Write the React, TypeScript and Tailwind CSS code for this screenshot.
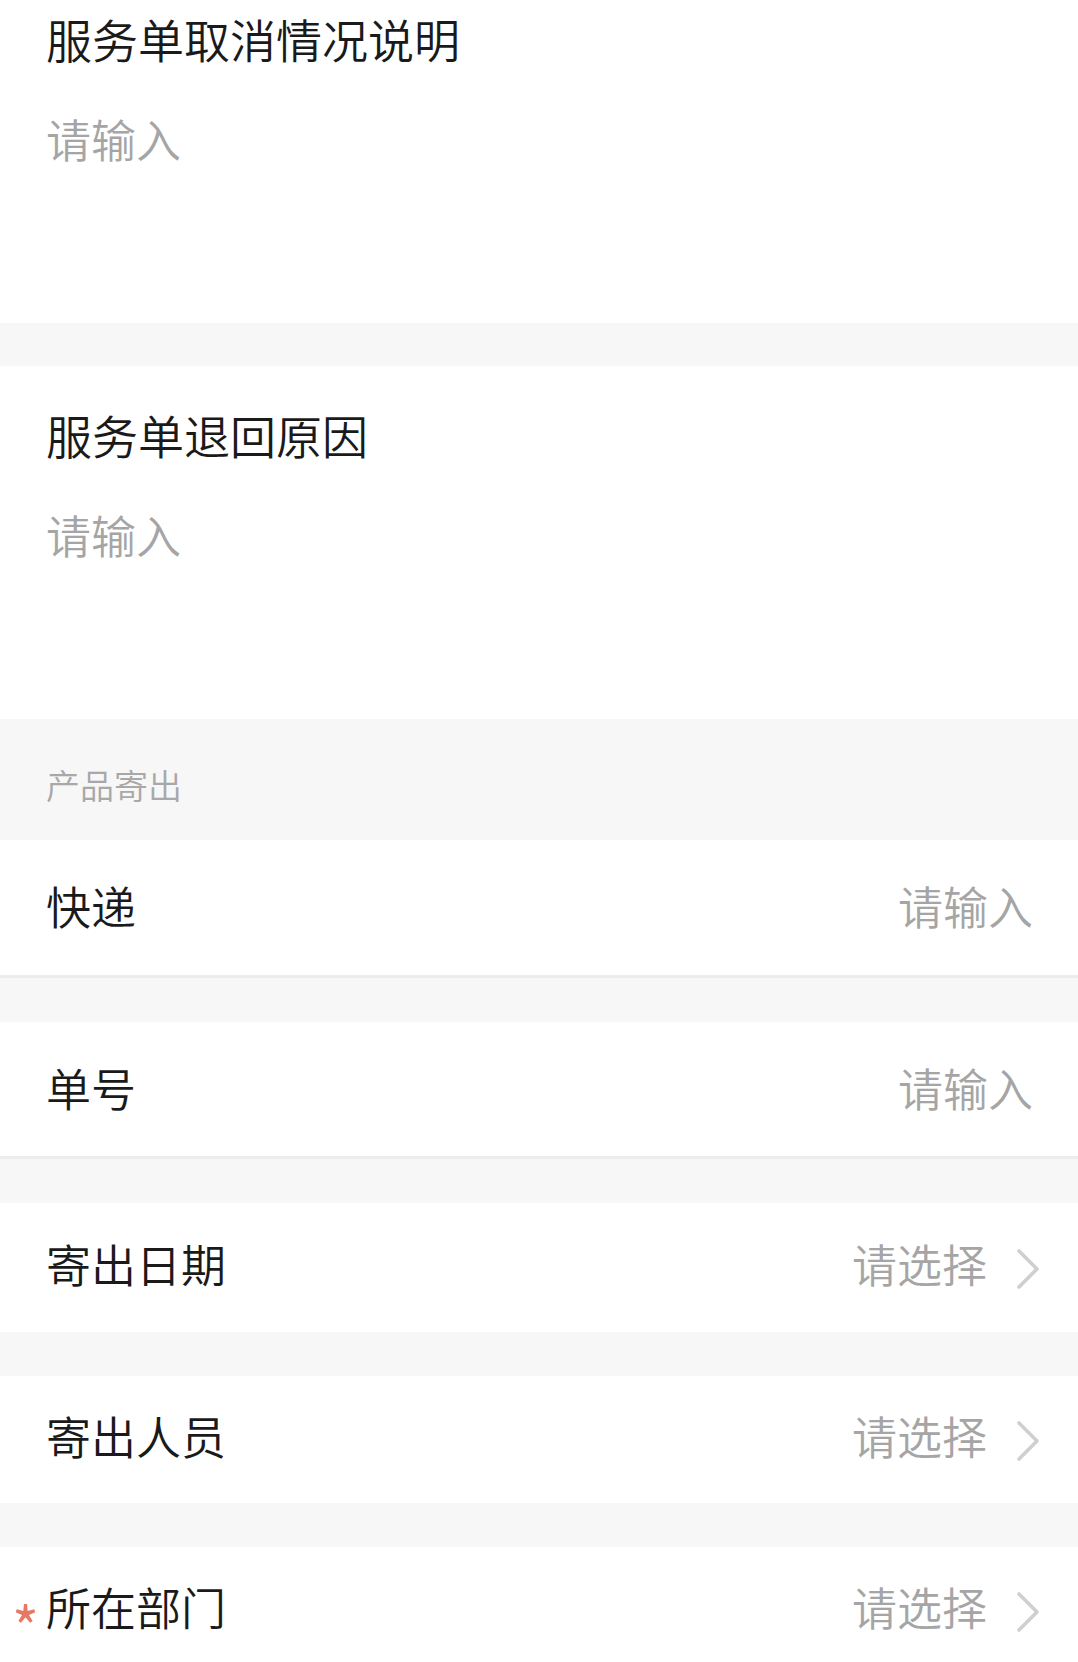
const font = { fontFamily: '"Noto Sans CJK SC", "Noto Sans", sans-serif' };

function Chevron() {
  return (
    <svg width="26" height="42" viewBox="0 0 26 42" fill="none" className="mt-[10px]">
      <polyline
        points="4,3 22,21 4,39"
        stroke="#cfcfcf"
        strokeWidth="3.6"
        strokeLinecap="round"
        strokeLinejoin="round"
      />
    </svg>
  );
}

function TextAreaBlock({ title, first }: { title: string; first?: boolean }) {
  return (
    <section className={`h-[353px] bg-white pl-[46px] pt-[40px] ${first ? "-mt-[30px]" : "mt-[43px]"}`}>
      <div className="text-[46px] font-[350] leading-[56px] text-[#1a1a1a]">{title}</div>
      <div className="mt-[45px] text-[45px] font-[350] leading-[56px] text-[#a5a5a5]">请输入</div>
    </section>
  );
}

function InputRow({ label, h }: { label: string; h: string }) {
  return (
    <div className={`flex ${h} items-center justify-between border-b-[3px] border-[#ececec] bg-white pb-[4px] pl-[46px] pr-[45px]`}>
      <span className="text-[45px] font-[350] leading-none text-[#1a1a1a]">{label}</span>
      <span className="text-[45px] font-[350] leading-none text-[#a5a5a5]">请输入</span>
    </div>
  );
}

function SelectRow({ label, required, h }: { label: string; required?: boolean; h: string }) {
  return (
    <div className={`flex ${h} items-center justify-between bg-white pb-[8px] pl-[46px] pr-[37px]`}>
      <span className="relative text-[45px] font-[350] leading-none text-[#1a1a1a]">
        {required && (
          <span className="absolute -left-[34px] top-[12px] text-[58px] font-normal leading-none text-[#e57a64]">*</span>
        )}
        {label}
      </span>
      <span className="flex items-center gap-[28px]">
        <span className="text-[45px] font-[350] leading-none text-[#a5a5a5]">请选择</span>
        <Chevron />
      </span>
    </div>
  );
}

export default function App() {
  return (
    <main className="min-h-[1662px] w-full overflow-hidden bg-[#f7f7f7]" style={font}>
      <TextAreaBlock title="服务单取消情况说明" first />
      <TextAreaBlock title="服务单退回原因" />

      <div className="h-[121px] pl-[46px] pt-[46px]">
        <span className="text-[34px] font-[350] leading-[40px] text-[#a8a8a8]">产品寄出</span>
      </div>

      <InputRow label="快递" h="h-[138px]" />
      <div className="mt-[44px]">
        <InputRow label="单号" h="h-[137px]" />
      </div>
      <div className="mt-[44px]">
        <SelectRow label="寄出日期" h="h-[129px]" />
      </div>
      <div className="mt-[44px]">
        <SelectRow label="寄出人员" h="h-[127px]" />
      </div>
      <div className="mt-[44px]">
        <SelectRow label="所在部门" required h="h-[127px]" />
      </div>
    </main>
  );
}
